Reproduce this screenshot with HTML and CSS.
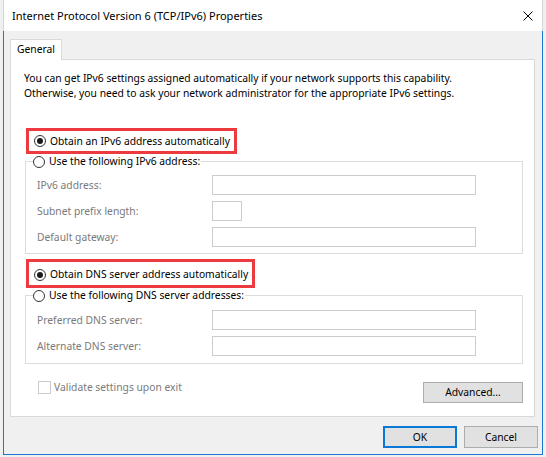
FILE: index.html
```html
<!DOCTYPE html>
<html>
<head>
<meta charset="utf-8">
<link rel="stylesheet" href="styles.css">
</head>
<body>
<div class="desk">
  <div class="win">
    <div class="titlebar">
      <span class="title">Internet Protocol Version 6 (TCP/IPv6) Properties</span>
      <svg class="close" viewBox="0 0 10 10" width="10" height="10"><path d="M0.5 0.5L9.5 9.5M9.5 0.5L0.5 9.5" stroke="#000" stroke-width="1" fill="none"/></svg>
    </div>
    <div class="body">
      <div class="tabs"><div class="tab">General</div></div>
      <div class="panel">
        <p class="intro">You can get IPv6 settings assigned automatically if your network supports this capability.<br>Otherwise, you need to ask your network administrator for the appropriate IPv6 settings.</p>
        <div class="hl hl-a"><span class="rb on"></span><span>Obtain an IPv6 address automatically</span></div>
        <fieldset class="group g1">
          <legend class="legend"><span class="rb"></span><span>Use the following IPv6 address:</span></legend>
          <div class="rows">
            <span class="lbl">IPv6 address:</span><span class="input wide"></span>
            <span class="lbl">Subnet prefix length:</span><span class="input small"></span>
            <span class="lbl">Default gateway:</span><span class="input wide"></span>
          </div>
        </fieldset>
        <div class="hl hl-b"><span class="rb on"></span><span>Obtain DNS server address automatically</span></div>
        <fieldset class="group g2">
          <legend class="legend"><span class="rb"></span><span>Use the following DNS server addresses:</span></legend>
          <div class="rows">
            <span class="lbl">Preferred DNS server:</span><span class="input wide"></span>
            <span class="lbl">Alternate DNS server:</span><span class="input wide"></span>
          </div>
        </fieldset>
        <div class="footer">
          <div class="check"><span class="cb"></span><span>Validate settings upon exit</span></div>
          <div class="btn adv">Advanced...</div>
        </div>
      </div>
      <div class="actions">
        <div class="btn ok">OK</div>
        <div class="btn cancel">Cancel</div>
      </div>
    </div>
  </div>
</div>
</body>
</html>
```
FILE: styles.css
```css
* { box-sizing: border-box; }
html, body { margin: 0; padding: 0; }
body {
  width: 546px;
  height: 457px;
  overflow: hidden;
  background: #f0f0f0;
  font-family: "Noto Sans", "Open Sans", sans-serif;
  font-size: 10.3px;
  color: #000;
}
.desk { padding-left: 3px; height: 457px; }
.win {
  width: 540px;
  height: 455px;
  display: flex;
  flex-direction: column;
}
.titlebar {
  height: 31px;
  flex: none;
  background: #fff;
  border-left: 1px solid #d4d4d4;
  border-right: 1px solid #d4d4d4;
  display: flex;
  align-items: center;
  padding-left: 8px;
  padding-right: 9px;
}
.title { flex: 1; font-size: 11px; line-height: 15px; }
.close { display: block; }
.body {
  flex: 1;
  background: #f0f0f0;
  border: 1px solid #1a78d2;
  border-top: none;
  padding: 8px 0 0 6px;
  display: flex;
  flex-direction: column;
}
.tabs {
  display: flex;
  height: 21px;
  margin-bottom: -1px;
  position: relative;
  z-index: 1;
}
.tab {
  width: 52px;
  height: 21px;
  background: #fff;
  border: 1px solid #d9d9d9;
  border-bottom: none;
  text-align: center;
  line-height: 19px;
}
.panel {
  width: 525px;
  height: 358px;
  flex: none;
  background: #fff;
  border: 1px solid #d9d9d9;
  padding-top: 11px;
  display: flex;
  flex-direction: column;
  align-items: flex-start;
}
.intro {
  margin: 0 0 0 13px;
  line-height: 15px;
}
.hl {
  display: flex;
  align-items: center;
  border: 3px solid #ec3a3f;
  margin-left: 15px;
  padding: 0 4px 0 5px;
  line-height: 15px;
}
.hl-a { margin-top: 27px; height: 26px; padding-top: 0; }
.hl-b { margin-top: 5px; height: 29px; padding-top: 2px; }
.rb {
  width: 12px;
  height: 12px;
  border: 1px solid #333;
  border-radius: 50%;
  background: #fff;
  margin-right: 4px;
  flex: none;
  display: flex;
  align-items: center;
  justify-content: center;
}
.rb.on::after {
  content: "";
  width: 6px;
  height: 6px;
  border-radius: 50%;
  background: #1a1a1a;
}
.group {
  margin: 0 0 0 14px;
  width: 498px;
  border: 1px solid #dcdcdc;
  padding: 0;
  min-width: 0;
}
.legend {
  display: flex;
  align-items: center;
  margin-left: 7px;
  padding: 0 1px 0 0;
  line-height: 15px;
}
.rows {
  display: grid;
  grid-template-columns: 175px auto;
  grid-auto-rows: 20px;
  row-gap: 6px;
  align-items: center;
  padding: 6px 0 6px 11px;
}
.g2 .rows { padding-top: 7px; padding-bottom: 7px; }
.lbl { color: #7a7a7a; }
.input {
  height: 20px;
  border: 1px solid #cccccc;
  background: #fff;
}
.input.wide { width: 264px; }
.input.small { width: 30px; }
.footer {
  align-self: stretch;
  display: flex;
  justify-content: space-between;
  align-items: flex-start;
  margin-top: 17px;
  padding: 0 11px 0 27px;
}
.check {
  display: flex;
  align-items: center;
  color: #7a7a7a;
  line-height: 13px;
}
.cb {
  width: 13px;
  height: 13px;
  border: 1px solid #cccccc;
  background: #fff;
  margin-right: 3px;
}
.btn {
  height: 21px;
  background: #e1e1e1;
  border: 1px solid #adadad;
  display: flex;
  align-items: center;
  justify-content: center;
  line-height: 15px;
}
.adv { width: 100px; margin-top: 1px; }
.actions {
  display: flex;
  justify-content: flex-end;
  gap: 7px;
  margin-top: 9px;
  padding-right: 4px;
}
.ok, .cancel { width: 74px; height: 22px; }
.ok { border: 2px solid #0a78d4; }
```
